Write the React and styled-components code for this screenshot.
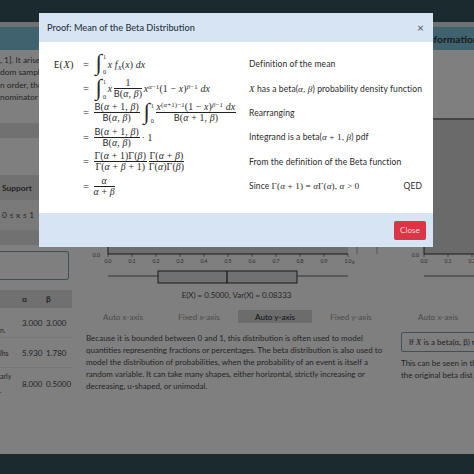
import React from 'react';
import styled, { createGlobalStyle } from 'styled-components';

const Global = createGlobalStyle`
  html, body {
    margin: 0;
    padding: 0;
  }
  body {
    font-family: Lato, "Open Sans", sans-serif;
    color: #4a4a4a;
  }
`;

const Page = styled.div`
  position: relative;
  width: 474px;
  height: 474px;
  overflow: hidden;
  display: flex;
  flex-direction: column;
  background: #ffffff;
`;

const TopBar = styled.div`
  height: 22px;
  flex: none;
  background: #34545f;
`;

const BottomBar = styled.div`
  height: 20px;
  flex: none;
  background: #34545f;
`;

const Columns = styled.div`
  flex: 1;
  min-height: 0;
  display: flex;
  padding-top: 5px;
  background: linear-gradient(#dde3e3 0, #dde3e3 5px, #ffffff 5px);
`;

const LeftCol = styled.div`
  width: 72px;
  flex: none;
  margin-right: 14px;
  overflow: hidden;
`;

const CenterCol = styled.div`
  width: 303px;
  flex: none;
  margin-right: 12px;
`;

const RightCol = styled.div`
  width: 73px;
  flex: none;
  overflow: hidden;
`;

const PanelHead = styled.div`
  height: 23px;
  display: flex;
  align-items: center;
  padding-left: ${({ $indent }) => $indent || 0}px;
  background: #7fc5dc;
  color: #333;
  font-size: 10.2px;
  font-weight: 700;
  white-space: nowrap;
`;

const Intro = styled.div`
  padding-top: 4px;
  height: 69px;
  font-size: 8.4px;
  line-height: 12.3px;
  white-space: nowrap;
`;

const Band = styled.div`
  height: ${({ $h }) => $h}px;
  margin-bottom: ${({ $mb }) => $mb || 0}px;
  display: flex;
  align-items: center;
  padding-left: 2px;
  background: ${({ $c }) => $c || '#e2e2e2'};
  font-size: 8.4px;
  font-weight: ${({ $bold }) => ($bold ? 700 : 400)};
  white-space: nowrap;
`;

const InputBox = styled.div`
  height: 27px;
  width: 68px;
  margin: 6px 0 10px;
  border: 1px solid #7aa5b0;
  border-left: none;
  border-radius: 0 3px 3px 0;
`;

const ParamHead = styled.div`
  display: grid;
  grid-template-columns: 22px 24px 26px;
  align-items: center;
  height: 18px;
  background: #e0e0e0;
  font-size: 8.4px;
  font-weight: 700;
`;

const ParamRow = styled.div`
  display: grid;
  grid-template-columns: 22px 24px 26px;
  height: 29px;
  align-items: center;
  font-size: 8px;
  border-bottom: 1px solid #ececec;
  &:last-child {
    border-bottom: none;
  }
`;

const RowLabel = styled.div`
  font-size: 7px;
  line-height: 14px;
  white-space: pre;
`;

const Value = styled.div`
  padding-top: ${({ $down }) => $down || 0}px;
`;

const PlotSvg = styled.svg`
  display: block;
  margin-top: 68px;
  overflow: hidden;
`;

const Stats = styled.div`
  width: 301px;
  height: 14px;
  text-align: center;
  font-size: 7.9px;
  line-height: 14px;
`;

const AxisRow = styled.div`
  display: flex;
  gap: 2px;
  margin-top: ${({ $mt }) => $mt}px;
`;

const AxisBtn = styled.div`
  width: 74px;
  height: 13px;
  flex: none;
  display: flex;
  align-items: center;
  justify-content: center;
  font-size: 8.1px;
  color: ${({ $active }) => ($active ? '#222' : '#999')};
  background: ${({ $active }) => ($active ? '#d8d8d8' : 'transparent')};
`;

const Blurb = styled.p`
  margin: 9px 0 0;
  font-size: 8px;
  line-height: 12px;
`;

const FormulaBox = styled.div`
  margin-top: 9px;
  height: 20px;
  box-sizing: border-box;
  width: 90px;
  padding-left: 7px;
  display: flex;
  align-items: center;
  border: 1px solid #7aa5b0;
  border-radius: 2px 0 0 2px;
  font-size: 8px;
  white-space: nowrap;
`;

const RightText = styled.div`
  margin-top: 5px;
  font-size: 8px;
  line-height: 12px;
  white-space: nowrap;
`;

const Backdrop = styled.div`
  position: absolute;
  inset: 0;
  background: rgba(0, 0, 0, 0.5);
`;

const Modal = styled.div`
  position: absolute;
  left: 39px;
  top: 13px;
  width: 394px;
  height: 234px;
  display: flex;
  flex-direction: column;
  background: #ffffff;
`;

const ModalHead = styled.div`
  height: 29px;
  flex: none;
  display: flex;
  align-items: center;
  justify-content: space-between;
  padding: 0 8px;
  background: #d6e4f4;
`;

const ModalTitle = styled.div`
  font-size: 9.2px;
  font-weight: 500;
  color: #2b3540;
`;

const CloseX = styled.div`
  font-size: 12px;
  color: #555;
  padding-right: 1px;
`;

const ModalBody = styled.div`
  flex: 1;
  min-width: 0;
  padding: 10px 12px 0 15px;
  display: grid;
  grid-template-columns: 29px 166px 1fr;
  grid-auto-rows: 24.4px;
  align-items: center;
  color: #2a2a2a;
`;

const ModalFoot = styled.div`
  height: 34px;
  flex: none;
  display: flex;
  align-items: center;
  justify-content: flex-end;
  padding-right: 7px;
  background: #d6e4f4;
`;

const CloseBtn = styled.div`
  width: 32px;
  height: 19px;
  display: flex;
  align-items: center;
  justify-content: center;
  border-radius: 2px;
  background: #dc3545;
  color: #f6d5d8;
  font-size: 8.2px;
`;

const Lhs = styled.div`
  font-family: "Liberation Serif", serif;
  font-size: 10.4px;
  letter-spacing: 0.3px;
`;

const Expr = styled.div`
  display: flex;
  align-items: center;
  gap: 1.5px;
  font-family: "Liberation Serif", serif;
  font-size: 9.8px;
  letter-spacing: 0.15px;
  white-space: nowrap;
`;

const Eq = styled.span`
  width: 9px;
  flex: none;
  font-size: 10.5px;
`;

const V = styled.i`
  font-style: italic;
`;

const Sans = styled.span`
  font-family: Lato, sans-serif;
  font-size: 9.2px;
`;

const Up = styled.sup`
  font-size: 6.8px;
  line-height: 0;
  vertical-align: 3.5px;
`;

const Down = styled.sub`
  font-size: 6.4px;
  line-height: 0;
  vertical-align: -2px;
`;

const Frac = styled.span`
  display: inline-flex;
  flex-direction: column;
  align-items: center;
`;

const Num = styled.span`
  padding: 0 1px;
  line-height: 10px;
`;

const Den = styled.span`
  align-self: stretch;
  text-align: center;
  line-height: 10px;
  border-top: 0.8px solid #222;
`;

const IntWrap = styled.span`
  display: inline-flex;
  align-items: stretch;
  height: 22px;
  margin-left: 2px;
`;

const IntSign = styled.span`
  font-size: 23px;
  line-height: 20px;
`;

const Limits = styled.span`
  display: flex;
  flex-direction: column;
  justify-content: space-between;
  font-size: 6.2px;
  line-height: 7px;
  margin-left: 1px;
`;

const Note = styled.div`
  font-size: 8.5px;
  letter-spacing: 0.1px;
  display: flex;
  justify-content: space-between;
  align-items: center;
  white-space: nowrap;
`;

const MathText = styled.span`
  font-family: "Liberation Serif", serif;
  font-size: 9.2px;
`;

const Int = () => (
  <IntWrap>
    <IntSign>∫</IntSign>
    <Limits>
      <span>1</span>
      <span>0</span>
    </Limits>
  </IntWrap>
);

const B = ({ children }) => (
  <span>
    <Sans>B</Sans>({children})
  </span>
);

const ab = (
  <>
    <V>α</V>, <V>β</V>
  </>
);
const a1b = (
  <>
    <V>α</V> + 1, <V>β</V>
  </>
);

const proofRows = [
  {
    lhs: (
      <>
        <Sans>E</Sans>(<V>X</V>)
      </>
    ),
    expr: (
      <>
        <Int />
        <span>
          <V>x f</V>
          <Down>
            <V>X</V>
          </Down>
          (<V>x</V>) <V>dx</V>
        </span>
      </>
    ),
    note: 'Definition of the mean',
  },
  {
    expr: (
      <>
        <Int />
        <V>x</V>
        <Frac>
          <Num>1</Num>
          <Den>
            <B>{ab}</B>
          </Den>
        </Frac>
        <span>
          <V>x</V>
          <Up>
            <V>α</V>−1
          </Up>
          (1 − <V>x</V>)
          <Up>
            <V>β</V>−1
          </Up>{' '}
          <V>dx</V>
        </span>
      </>
    ),
    note: (
      <span>
        <MathText>
          <V>X</V>
        </MathText>{' '}
        has a beta(<MathText>{ab}</MathText>) probability density function
      </span>
    ),
  },
  {
    expr: (
      <>
        <Frac>
          <Num>
            <B>{a1b}</B>
          </Num>
          <Den>
            <B>{ab}</B>
          </Den>
        </Frac>
        <Int />
        <Frac>
          <Num>
            <V>x</V>
            <Up>
              (<V>α</V>+1)−1
            </Up>
            (1 − <V>x</V>)
            <Up>
              <V>β</V>−1
            </Up>{' '}
            <V>dx</V>
          </Num>
          <Den>
            <B>{a1b}</B>
          </Den>
        </Frac>
      </>
    ),
    note: 'Rearranging',
  },
  {
    expr: (
      <>
        <Frac>
          <Num>
            <B>{a1b}</B>
          </Num>
          <Den>
            <B>{ab}</B>
          </Den>
        </Frac>
        <span>· 1</span>
      </>
    ),
    note: (
      <span>
        Integrand is a beta(
        <MathText>
          <V>α</V> + 1, <V>β</V>
        </MathText>
        ) pdf
      </span>
    ),
  },
  {
    expr: (
      <>
        <Frac>
          <Num>
            Γ(<V>α</V> + 1)Γ(<V>β</V>)
          </Num>
          <Den>
            Γ(<V>α</V> + <V>β</V> + 1)
          </Den>
        </Frac>
        <Frac>
          <Num>
            Γ(<V>α</V> + <V>β</V>)
          </Num>
          <Den>
            Γ(<V>α</V>)Γ(<V>β</V>)
          </Den>
        </Frac>
      </>
    ),
    note: 'From the definition of the Beta function',
  },
  {
    expr: (
      <Frac>
        <Num>
          <V>α</V>
        </Num>
        <Den>
          <V>α</V> + <V>β</V>
        </Den>
      </Frac>
    ),
    note: (
      <>
        <span>
          Since{' '}
          <MathText>
            Γ(<V>α</V> + 1) = <V>α</V>Γ(<V>α</V>), <V>α</V> &gt; 0
          </MathText>
        </span>
        <span>QED</span>
      </>
    ),
  },
];

const params = [
  { label: '\nn.', a: '3.000', b: '3.000', down: 0 },
  { label: 'lhs\n', a: '5.930', b: '1.780', down: 1 },
  { label: 'arly\n.', a: '8.000', b: '0.5000', down: 2 },
];

const ticks = ['0.0', '0.1', '0.2', '0.3', '0.4', '0.5', '0.6', '0.7', '0.8', '0.9', '1.0'];

// origin of the drawing is x=86, y=118 on the page
const CenterPlot = () => (
  <PlotSvg width="303" height="170" fontFamily="Lato, sans-serif">
    <rect x="22" y="2" width="240" height="134" fill="#dcdcdc" />
    <path d="M22 2V136H262" fill="none" stroke="#333" strokeWidth="1" />
    <path d="M271 129V136M291 129V136" stroke="#aaa" strokeWidth="1" />
    <text x="14" y="139" fontSize="5.2" textAnchor="end" fill="#555">0.0</text>
    {ticks.map((t, i) => (
      <g key={t}>
        <path d={`M${22 + i * 24} 136v3`} stroke="#555" strokeWidth="0.7" />
        <text x={22 + i * 24} y="145" fontSize="5.2" textAnchor="middle" fill="#555">{t}</text>
      </g>
    ))}
    <text x="266" y="146" fontSize="5.2" fill="#555">x</text>
    <path d="M22 158H72M211 158H262" stroke="#666" strokeWidth="1.2" />
    <rect x="72" y="153" width="139" height="12" fill="#dfe3e6" stroke="#333" strokeWidth="1" />
    <path d="M141 153V165" stroke="#222" strokeWidth="1.2" />
  </PlotSvg>
);

const RightPlot = () => (
  <PlotSvg width="73" height="170" fontFamily="Lato, sans-serif">
    <rect x="23" y="2" width="50" height="134" fill="#d4d4d4" />
    <path d="M0 1H73" stroke="#888" strokeWidth="2" />
    <path d="M23 2V136H73" fill="none" stroke="#333" strokeWidth="1" />
    <text x="18" y="139" fontSize="5.2" textAnchor="end" fill="#555">0.0</text>
    <text x="23" y="145" fontSize="5.2" textAnchor="middle" fill="#555">0.0</text>
    <text x="47" y="145" fontSize="5.2" textAnchor="middle" fill="#555">0.1</text>
    <text x="71" y="145" fontSize="5.2" textAnchor="middle" fill="#555">0.2</text>
    <path d="M23 136v3M47 136v3M71 136v3" stroke="#555" strokeWidth="0.7" />
    <path d="M23 158H73" stroke="#666" strokeWidth="1.2" />
  </PlotSvg>
);

export default function App() {
  return (
    <Page>
      <Global />
      <TopBar />
      <Columns>
        <LeftCol>
          <PanelHead />
          <Intro>
            , 1]. It arises<br />
            dom sample<br />
            n order, the<br />
            nominator of
          </Intro>
          <Band $h={15} $mb={37} />
          <Band $h={25} $bold>Support</Band>
          <Band $h={30} $c="#f4f4f4">0 ≤ x ≤ 1</Band>
          <Band $h={15} />
          <InputBox />
          <ParamHead>
            <span />
            <span>α</span>
            <span>β</span>
          </ParamHead>
          {params.map((p) => (
            <ParamRow key={p.a}>
              <RowLabel>{p.label}</RowLabel>
              <Value $down={p.down}>{p.a}</Value>
              <Value $down={p.down}>{p.b}</Value>
            </ParamRow>
          ))}
        </LeftCol>
        <CenterCol>
          <PanelHead />
          <CenterPlot />
          <Stats>E(X) = 0.5000, Var(X) = 0.08333</Stats>
          <AxisRow $mt={8}>
            <AxisBtn>Auto x-axis</AxisBtn>
            <AxisBtn>Fixed x-axis</AxisBtn>
            <AxisBtn $active>Auto y-axis</AxisBtn>
            <AxisBtn>Fixed y-axis</AxisBtn>
          </AxisRow>
          <Blurb>
            Because it is bounded between 0 and 1, this distribution is often used to model
            quantities representing fractions or percentages. The beta distribution is also used to
            model the distribution of probabilities, when the probability of an event is itself a
            random variable. It can take many shapes, either horizontal, strictly increasing or
            decreasing, u-shaped, or unimodal.
          </Blurb>
        </CenterCol>
        <RightCol>
          <PanelHead $indent={24}>Information</PanelHead>
          <RightPlot />
          <AxisRow $mt={22}>
            <AxisBtn>Auto x-axis</AxisBtn>
          </AxisRow>
          <FormulaBox>
            If&nbsp;<MathText><V>X</V></MathText>&nbsp;is a beta(α, β) ra
          </FormulaBox>
          <RightText>
            This can be seen in th<br />
            the original beta dist
          </RightText>
        </RightCol>
      </Columns>
      <BottomBar />
      <Backdrop />
      <Modal>
        <ModalHead>
          <ModalTitle>Proof: Mean of the Beta Distribution</ModalTitle>
          <CloseX>×</CloseX>
        </ModalHead>
        <ModalBody>
          {proofRows.map((row, i) => (
            <React.Fragment key={i}>
              <Lhs>{row.lhs}</Lhs>
              <Expr>
                <Eq>=</Eq>
                {row.expr}
              </Expr>
              <Note>{row.note}</Note>
            </React.Fragment>
          ))}
        </ModalBody>
        <ModalFoot>
          <CloseBtn>Close</CloseBtn>
        </ModalFoot>
      </Modal>
    </Page>
  );
}
